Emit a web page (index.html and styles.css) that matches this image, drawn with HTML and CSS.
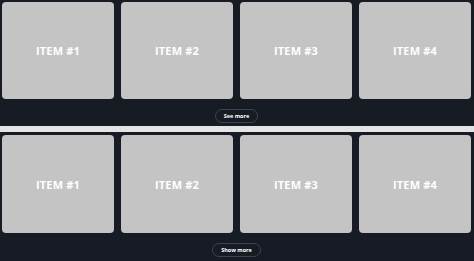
FILE: index.html
```html
<!DOCTYPE html>
<html lang="en">
<head>
    <meta charset="UTF-8">
    <meta name="viewport" content="width=device-width, initial-scale=1.0">
    <title>Item lists</title>
    <link rel="stylesheet" href="styles.css">
</head>
<body>
    <!-- first list -->
    <section class="list">
        <div class="grid">
            <div class="item">ITEM #1</div>
            <div class="item">ITEM #2</div>
            <div class="item">ITEM #3</div>
            <div class="item">ITEM #4</div>
        </div>
        <div class="more-row">
            <button class="more-btn">See more</button>
        </div>
    </section>

    <div class="divider"></div>

    <!-- second list -->
    <section class="list list-second">
        <div class="grid">
            <div class="item">ITEM #1</div>
            <div class="item">ITEM #2</div>
            <div class="item">ITEM #3</div>
            <div class="item">ITEM #4</div>
        </div>
        <div class="more-row">
            <button class="more-btn">Show more</button>
        </div>
    </section>
</body>
</html>
```

FILE: styles.css
```css
* { margin: 0; padding: 0; box-sizing: border-box; }
html, body { overflow: hidden; }
body {
     background: #171c24;
     font-family: "Open Sans", "Liberation Sans", sans-serif;
 }
.list {
     background: #171c24;
     padding: 2px 3px 3px 2px;
 }
.list-second { padding-top: 3px; padding-bottom: 4px; }
.grid {
     display: grid;
     grid-template-columns: repeat(4, 1fr);
     gap: 7px;
 }
.item {
     height: 97px;
     background: #c4c4c4;
     border-radius: 4px;
     display: flex;
     align-items: center;
     justify-content: center;
     color: #fff;
     font-size: 11px;
     font-weight: 700;
     letter-spacing: 0.2px;
 }
.list-second .item { height: 98px; }
.more-row {
     display: flex;
     justify-content: center;
     margin-top: 10px;
 }
.more-btn {
     height: 14px;
     padding: 0 8px;
     background: #171c24;
     border: 1px solid #3c4350;
     border-radius: 10px;
     color: #fff;
     font-family: "Open Sans", "Liberation Sans", sans-serif;
     font-size: 5.5px;
     font-weight: 700;
     cursor: pointer;
 }
.divider { height: 6px; background: #e4e4e4; }
```
